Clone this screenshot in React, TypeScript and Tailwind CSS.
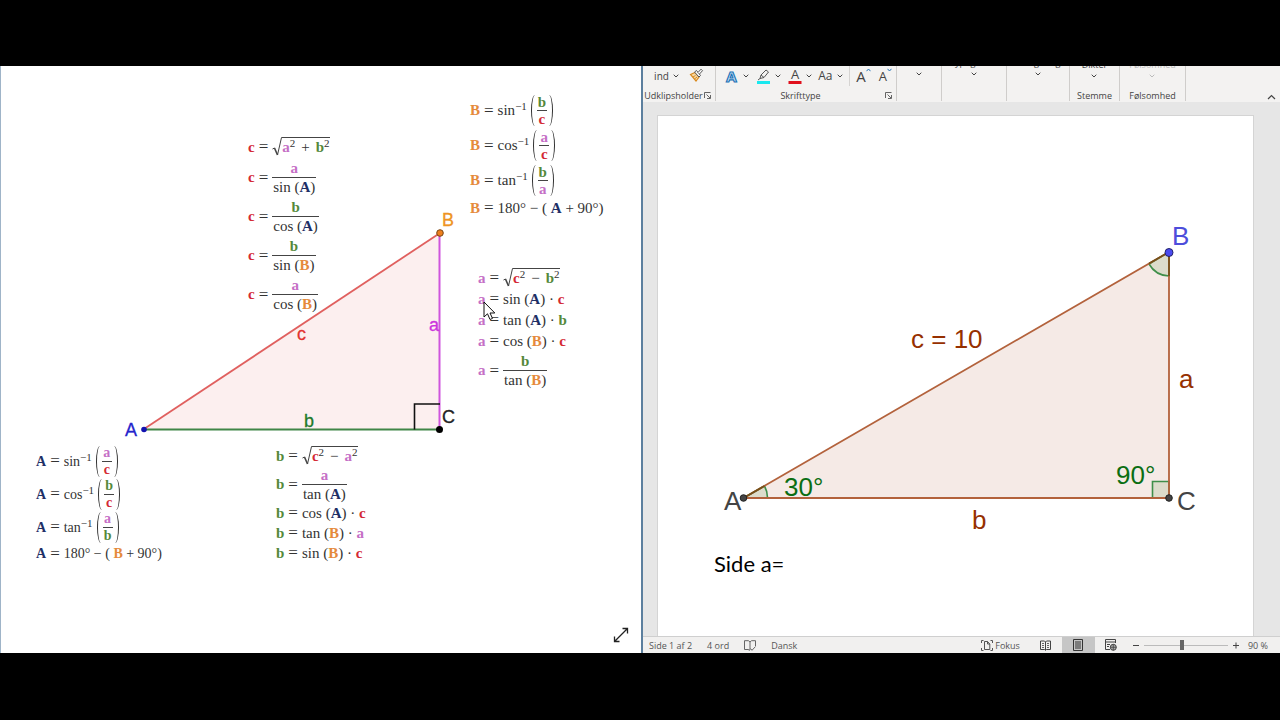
import type { ReactNode } from "react";

const colors = {
  a: "text-[#c56fc6]",
  b: "text-[#55893a]",
  c: "text-[#d42a35]",
  A: "text-[#1e2f66]",
  B: "text-[#e58a3c]",
};

type Name = keyof typeof colors;

function V({ n }: { n: Name }) {
  return <b className={colors[n]}>{n}</b>;
}

function Equation({
  left,
  tall,
  className = "h-5",
  children,
}: {
  left: Name;
  tall?: boolean;
  className?: string;
  children: ReactNode;
}) {
  return (
    <div
      className={`flex items-center gap-1 whitespace-pre ${
        tall ? "h-[37px]" : className
      }`}
    >
      <V n={left} />
      <span className="text-[17px]">=</span>
      {children}
    </div>
  );
}

function Fraction({ top, children }: { top: Name; children: ReactNode }) {
  return (
    <span className="flex flex-col items-center leading-[18px]">
      <V n={top} />
      <span className="border-t border-[#444] px-px">{children}</span>
    </span>
  );
}

function Root({ x, op, y }: { x: Name; op: string; y: Name }) {
  return (
    <span className="flex">
      <svg width="10" height="19" viewBox="0 0 10 19" fill="none" stroke="#444">
        <path d="M0.5 12 L2.5 11" />
        <path d="M2.5 11 L5.5 18" strokeWidth="1.6" />
        <path d="M5.5 18 L9.5 0.5 H10" />
      </svg>
      <span className="border-t border-[#444] leading-[19px]">
        <V n={x} />
        <Sup>2</Sup>
        <span className="mx-1.5">{op}</span>
        <V n={y} />
        <Sup>2</Sup>
      </span>
    </span>
  );
}

function Sup({ children }: { children: ReactNode }) {
  return <sup className="-top-[5px] text-[11px] leading-none">{children}</sup>;
}

function Inverse({ fn, top, bottom }: { fn: string; top: Name; bottom: Name }) {
  return (
    <span className="flex items-center">
      <span>
        {fn}
        <Sup>−1</Sup>
      </span>
      <span className="ml-1 h-[31px] w-2 rounded-[50%] border-l border-[#333]" />
      <span className="-mx-0.5 flex flex-col items-center leading-4">
        <V n={top} />
        <span className="h-px w-2.5 bg-[#444]" />
        <V n={bottom} />
      </span>
      <span className="h-[31px] w-2 rounded-[50%] border-r border-[#333]" />
    </span>
  );
}

function FormulaSheet() {
  return (
    <section className="relative box-content w-1/2 shrink-0 overflow-hidden border-r-2 border-l border-r-[#5c7f9e] border-l-[#9fb4c8] bg-white">
      <svg
        className="block"
        width="640"
        height="587"
        viewBox="1 66 640 587"
        fontFamily="'Liberation Sans', Arial, sans-serif"
        fontSize="18"
      >
        <path d="M144 429 L440 233 V430 Z" fill="#fcefef" />
        <path d="M144 429 L440 233" stroke="#e0605f" strokeWidth="1.8" />
        <path d="M144 429.500 H440" stroke="#3f8547" strokeWidth="1.8" />
        <path d="M439.500 233 V430" stroke="#cf55dd" strokeWidth="2" />
        <path d="M440 404 H414.500 V429.500" fill="none" stroke="#111" strokeWidth="1.6" />
        <circle cx="144" cy="429.500" r="2.800" fill="#1212b0" />
        <circle cx="440" cy="233" r="3.300" fill="#ee7f1d" stroke="#7a4715" />
        <circle cx="439.500" cy="429.500" r="3.500" fill="#000" />
        <g strokeWidth="0.300">
          <text x="125" y="436" fill="#2525cc" stroke="#2525cc">A</text>
          <text x="442" y="226" fill="#ee9422" stroke="#ee9422">B</text>
          <text x="442" y="423" fill="#222" stroke="#222">C</text>
          <text x="429" y="331" fill="#cc33dd" stroke="#cc33dd">a</text>
          <text x="304" y="427" fill="#1f7a2b" stroke="#1f7a2b">b</text>
          <text x="297" y="340" fill="#e2332f" stroke="#e2332f">c</text>
        </g>
      </svg>

      <div className="absolute inset-0 font-['Liberation_Serif',serif] text-[15px] text-[#333]">
        <div className="absolute top-[71px] left-[247px] flex flex-col gap-0.5">
          <Equation left="c"><Root x="a" op="+" y="b" /></Equation>
          <Equation left="c" tall><Fraction top="a">sin (<V n="A" />)</Fraction></Equation>
          <Equation left="c" tall><Fraction top="b">cos (<V n="A" />)</Fraction></Equation>
          <Equation left="c" tall><Fraction top="b">sin (<V n="B" />)</Fraction></Equation>
          <Equation left="c" tall><Fraction top="a">cos (<V n="B" />)</Fraction></Equation>
        </div>

        <div className="absolute top-[27px] left-[469px]">
          <Equation left="B" className="h-[35px]"><Inverse fn="sin" top="b" bottom="c" /></Equation>
          <Equation left="B" className="h-[35px]"><Inverse fn="cos" top="a" bottom="c" /></Equation>
          <Equation left="B" className="h-[35px]"><Inverse fn="tan" top="b" bottom="a" /></Equation>
          <Equation left="B"><span>180° − ( <V n="A" /> + 90°)</span></Equation>
        </div>

        <div className="absolute top-[202px] left-[477px] flex flex-col gap-px">
          <Equation left="a"><Root x="c" op="−" y="b" /></Equation>
          <Equation left="a"><span>sin (<V n="A" />) · <V n="c" /></span></Equation>
          <Equation left="a"><span>tan (<V n="A" />) · <V n="b" /></span></Equation>
          <Equation left="a"><span>cos (<V n="B" />) · <V n="c" /></span></Equation>
          <Equation left="a" tall><Fraction top="b">tan (<V n="B" />)</Fraction></Equation>
        </div>

        <div className="absolute top-[379px] left-[35px] text-sm">
          <Equation left="A" className="h-[33px]"><Inverse fn="sin" top="a" bottom="c" /></Equation>
          <Equation left="A" className="h-[33px]"><Inverse fn="cos" top="b" bottom="c" /></Equation>
          <Equation left="A" className="h-[33px]"><Inverse fn="tan" top="a" bottom="b" /></Equation>
          <Equation left="A"><span>180° − ( <V n="B" /> + 90°)</span></Equation>
        </div>

        <div className="absolute top-[380px] left-[275px]">
          <Equation left="b"><Root x="c" op="−" y="a" /></Equation>
          <Equation left="b" tall><Fraction top="a">tan (<V n="A" />)</Fraction></Equation>
          <Equation left="b"><span>cos (<V n="A" />) · <V n="c" /></span></Equation>
          <Equation left="b"><span>tan (<V n="B" />) · <V n="a" /></span></Equation>
          <Equation left="b"><span>sin (<V n="B" />) · <V n="c" /></span></Equation>
        </div>
      </div>

      <svg className="absolute top-[235px] left-[482px]" width="13" height="20" viewBox="0 0 13 20">
        <path d="M1 1 V16 L4.500 12.800 L7 18.500 L9.500 17.400 L7 12 H11.800 Z" fill="#fff" stroke="#111" />
      </svg>
      <button className="absolute right-3 bottom-2.5" aria-label="Expand">
        <svg width="16" height="16" viewBox="0 0 16 16" fill="none" stroke="#222" strokeWidth="1.300">
          <path d="M1.500 14.500 L14.500 1.500 M9.500 1.500 H14.500 V6.500 M1.500 9.500 V14.500 H6.500" />
        </svg>
      </button>
    </section>
  );
}

function Chevron() {
  return (
    <svg className="shrink-0" width="6" height="4" viewBox="0 0 6 4" fill="none" stroke="currentColor">
      <path d="M0.700 0.700 L3 3 L5.300 0.700" />
    </svg>
  );
}

function Launcher() {
  return (
    <svg width="7" height="7" viewBox="0 0 7 7" fill="none" stroke="#555" strokeWidth="0.900">
      <path d="M0.500 6 V0.500 H6.500 M2.500 2.500 L6 6 M6.500 3 V6.500 H3" />
    </svg>
  );
}

function RibbonGroup({
  width,
  label,
  launcher,
  children,
}: {
  width: string;
  label?: string;
  launcher?: boolean;
  children: ReactNode;
}) {
  return (
    <div className={`flex h-[35px] flex-col border-r border-[#cfcdcb] ${width}`}>
      <div className="flex h-6 items-end justify-center">{children}</div>
      <div className="flex h-[11px] items-center">
        <span className="flex-1 text-center leading-3 whitespace-nowrap">{label}</span>
        {launcher && (
          <button className="pr-1" aria-label={`${label} dialog`}>
            <Launcher />
          </button>
        )}
      </div>
    </div>
  );
}

function BigButton({ label, low, muted }: { label?: string; low?: boolean; muted?: boolean }) {
  return (
    <button
      aria-label={label ?? "Afsnit"}
      className={`flex flex-col items-center gap-1 leading-[10px] ${low ? "pb-3" : "pb-3.5"} ${
        muted ? "text-[#bbb]" : ""
      }`}
    >
      {label && <span>{label}</span>}
      <Chevron />
    </button>
  );
}

function Ribbon() {
  return (
    <div className="flex h-9 items-start overflow-hidden bg-[#f3f2f1] font-['Open_Sans',sans-serif] text-[9px] text-[#444]">
      <RibbonGroup width="w-[73px]" label="Udklipsholder" launcher>
        <button className="mb-[7px] flex flex-col items-center text-[10px] leading-[14px]">
          <span>Sæt</span>
          <span className="flex items-center gap-1">
            ind <Chevron />
          </span>
        </button>
        <button className="mb-2 ml-2.5" aria-label="Formatpensel">
          <svg width="15" height="14" viewBox="0 0 15 14" fill="none">
            <path d="M1.500 6.500 L6 4.500 L10 9 L7 13 Z" fill="#f6d9a6" stroke="#d98a1f" strokeWidth="1.200" />
            <path d="M4 9 L6.500 7.500 M5.500 11 L8 9" stroke="#d98a1f" />
            <path d="M5.500 4 L7.500 2.500 L11.500 7.500 L10 9 Z" fill="#fff" stroke="#555" />
            <path d="M9 4.500 L12 1.200 L13.500 2.700 L10.500 6" fill="#fff" stroke="#555" />
          </svg>
        </button>
      </RibbonGroup>

      <RibbonGroup width="w-[181px]" label="Skrifttype" launcher>
        <div className="flex h-full flex-1 items-center justify-between pr-1 pb-1 pl-2">
          <button className="flex items-center gap-1" aria-label="Teksteffekter">
            <svg className="overflow-visible" width="15" height="15" viewBox="0 0 15 15" fontFamily="'Open Sans', sans-serif">
              <text x="7.500" y="13" textAnchor="middle" fontSize="15" fontWeight="700" fill="#d9ecfa" stroke="#2374b8" strokeWidth="1.200">A</text>
            </svg>
            <Chevron />
          </button>
          <button className="flex items-center gap-1" aria-label="Fremhævning">
            <svg width="15" height="15" viewBox="0 0 15 15" fill="none">
              <path d="M4 9.500 L5 6 L10 1 L12.500 3 L8 8.500 Z M5 6 L8 8.500 M4 9.500 L2 11" stroke="#555" />
              <path d="M1 12 H14 V15 H1 Z" fill="#19e8ef" />
            </svg>
            <Chevron />
          </button>
          <button className="flex items-center gap-1" aria-label="Skriftfarve">
            <svg className="overflow-visible" width="14" height="15" viewBox="0 0 14 15" fontFamily="'Open Sans', sans-serif">
              <text x="7" y="10" textAnchor="middle" fontSize="13" fill="#444">A</text>
              <path d="M0.500 12 H13.500 V15 H0.500 Z" fill="#e0101c" />
            </svg>
            <Chevron />
          </button>
          <button className="flex items-center gap-1 text-xs">
            Aa <Chevron />
          </button>
          <div className="flex h-full items-center gap-2 border-l border-[#d6d4d2] pl-1.5">
            <button className="flex" aria-label="Forstør skrift">
              <span className="text-[15px] leading-4">A</span>
              <svg width="5" height="4" viewBox="0 0 5 4" fill="none" stroke="#2374b8">
                <path d="M0.500 3.200 L2.500 1 L4.500 3.200" />
              </svg>
            </button>
            <button className="flex" aria-label="Formindsk skrift">
              <span className="text-[13px] leading-4">A</span>
              <svg width="5" height="4" viewBox="0 0 5 4" fill="none" stroke="#2374b8">
                <path d="M0.500 0.800 L2.500 3 L4.500 0.800" />
              </svg>
            </button>
          </div>
        </div>
      </RibbonGroup>

      <RibbonGroup width="w-[45px]"><BigButton /></RibbonGroup>
      <RibbonGroup width="w-[65px]"><BigButton label="Typografier" /></RibbonGroup>
      <RibbonGroup width="w-[63px]"><BigButton label="Redigering" /></RibbonGroup>
      <RibbonGroup width="w-[50px]" label="Stemme"><BigButton label="Dikter" low /></RibbonGroup>
      <RibbonGroup width="w-[66px]" label="Følsomhed"><BigButton label="Følsomhed" low muted /></RibbonGroup>
      <button className="mr-1 mb-0.5 ml-auto self-end" aria-label="Skjul båndet">
        <svg width="9" height="6" viewBox="0 0 9 6" fill="none" stroke="#444" strokeWidth="1.200">
          <path d="M1 5 L4.500 1.500 L8 5" />
        </svg>
      </button>
    </div>
  );
}

function TriangleFigure() {
  return (
    <svg
      className="block w-full"
      viewBox="658 116 595 430"
      fontFamily="'Liberation Sans', Arial, sans-serif"
      fontSize="26"
    >
      <path d="M743.500 498 L1169 252 V498 Z" fill="#f5eae6" />
      <g fill="#dcdccb" stroke="#3f8f4a" strokeWidth="1.600">
        <path d="M1169 252 L1149 264 A24 24 0 0 0 1169 276 Z" />
        <path d="M743.500 498 L764.500 486 A24 24 0 0 1 767.500 498 Z" />
        <path d="M1169 498 H1152.500 V481.500 H1169 Z" />
      </g>
      <path d="M743.500 498 L1169 252 V498 Z" fill="none" stroke="#b3623c" strokeWidth="1.800" />
      <g stroke="#74501a" strokeWidth="1.600">
        <path d="M1169 252 L1149 263.500 M1169 252 V276 M743.500 498 L764.500 486" />
      </g>
      <circle cx="743.500" cy="498" r="3.300" fill="#444" stroke="#222" />
      <circle cx="1169" cy="252.500" r="4" fill="#4a4af0" stroke="#22226a" />
      <circle cx="1169" cy="498" r="3.300" fill="#444" stroke="#222" />
      <text x="724" y="510" fill="#444">A</text>
      <text x="1172" y="245" fill="#4d4ddb">B</text>
      <text x="1177" y="510" fill="#444">C</text>
      <text x="1179" y="388" fill="#963000">a</text>
      <text x="972" y="529" fill="#963000">b</text>
      <text x="911" y="348" fill="#963000">c = 10</text>
      <text x="784" y="496" fill="#0b6e12">30°</text>
      <text x="1116" y="484" fill="#0b6e12">90°</text>
    </svg>
  );
}

function StatusBar() {
  return (
    <footer className="flex h-[17px] shrink-0 items-center border-t border-[#cfcfcf] bg-[#f1f0ef] font-['Open_Sans',sans-serif] text-[9px] whitespace-nowrap text-[#555]">
      <div className="flex items-center gap-[15px] pt-px pl-1.5">
        <span>Side 1 af 2</span>
        <span>4 ord</span>
        <button aria-label="Korrektur">
          <svg width="12" height="11" viewBox="0 0 12 11" fill="none" stroke="#666">
            <path d="M6 2 L4.500 0.700 H0.500 V9.500 H4 L6 10.300 M6 2 L7.500 0.700 H11.500 V6 M6 2 V10 M6.500 8.500 L8 10.300 L11.500 6.500" />
          </svg>
        </button>
        <span>Dansk</span>
      </div>
      <div className="ml-auto flex h-full items-center pr-3">
        <button className="mr-2.5 flex items-center gap-0.5 pt-px">
          <svg width="12" height="11" viewBox="0 0 12 11" fill="none" stroke="#555">
            <path d="M0.500 3 V0.500 H2.500 M9.500 0.500 H11.500 V3 M0.500 8 V10.500 H2.500 M9.500 10.500 H11.500 V8" />
            <path d="M3.500 1.500 H6.500 L8.800 4 V9.500 H3.500 Z M6.500 1.500 V4 H8.800" />
          </svg>
          Fokus
        </button>
        <button className="flex h-full w-8 items-center justify-center" aria-label="Læsetilstand">
          <svg width="11" height="11" viewBox="0 0 11 11" fill="none" stroke="#444">
            <path d="M0.500 1 H4.500 L5.500 2 L6.500 1 H10.500 V9.500 H6.500 L5.500 10.300 L4.500 9.500 H0.500 Z M5.500 2 V10" />
            <path d="M2 3.500 H4 M2 5.500 H4 M2 7.500 H4 M7 3.500 H9 M7 5.500 H9 M7 7.500 H9" strokeWidth="0.800" />
          </svg>
        </button>
        <button className="flex h-full w-[33px] items-center justify-center bg-[#c6c6c6]" aria-label="Udskriftslayout">
          <svg width="10" height="12" viewBox="0 0 10 12" fill="none" stroke="#333">
            <path d="M0.500 0.500 H9.500 V11.500 H0.500 Z M2 3 H8 M2 5 H8 M2 7 H8 M2 9 H8" />
          </svg>
        </button>
        <button className="flex h-full w-[33px] items-center justify-center" aria-label="Weblayout">
          <svg width="12" height="12" viewBox="0 0 12 12" fill="none" stroke="#444">
            <path d="M10.500 4 V0.500 H0.500 V10.500 H5 M0.500 3 H10.500 M2 5.500 H5 M2 7.500 H4" />
            <circle cx="8.300" cy="8.300" r="3" fill="#aaa" />
            <path d="M5.300 8.300 H11.300 M8.300 5.300 V11.300" strokeWidth="0.800" />
          </svg>
        </button>
        <button className="ml-1" aria-label="Zoom ud">
          <svg width="8" height="8" viewBox="0 0 8 8" stroke="#444"><path d="M1 4.500 H7" /></svg>
        </button>
        <input
          type="range"
          aria-label="Zoom"
          min={0}
          max={100}
          defaultValue={45}
          className="mx-1 h-px w-[84px] appearance-none bg-[#bbb] [&::-webkit-slider-thumb]:h-2.5 [&::-webkit-slider-thumb]:w-1 [&::-webkit-slider-thumb]:appearance-none [&::-webkit-slider-thumb]:bg-[#666]"
        />
        <button aria-label="Zoom ind">
          <svg width="8" height="8" viewBox="0 0 8 8" stroke="#444"><path d="M1 4.500 H7 M4 1.500 V7.500" /></svg>
        </button>
        <span className="ml-2 pt-px">90 %</span>
      </div>
    </footer>
  );
}

function WordWindow() {
  return (
    <section className="flex min-w-0 flex-1 flex-col bg-[#e6e6e6]">
      <Ribbon />
      <article className="mt-3.5 mr-[27px] ml-[15px] flex-1 overflow-hidden bg-white ring-1 ring-[#d4d4d4]">
        <TriangleFigure />
        <p className="pl-14 font-['Lato',sans-serif] text-[22px] leading-9 text-black">Side a=</p>
      </article>
      <StatusBar />
    </section>
  );
}

export default function App() {
  return (
    <main className="flex h-screen bg-black pt-[66px] pb-[67px]">
      <FormulaSheet />
      <WordWindow />
    </main>
  );
}
